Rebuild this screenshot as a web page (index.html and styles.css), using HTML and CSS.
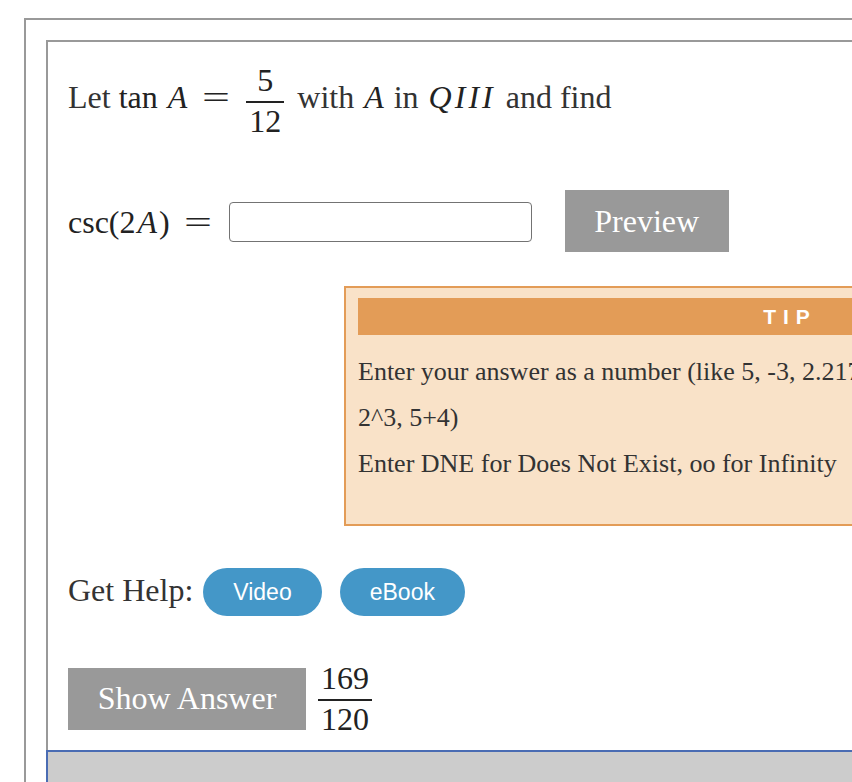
FILE: index.html
```html
<!DOCTYPE html>
<html lang="en">
<head>
<meta charset="utf-8">
<title>Question</title>
<link rel="stylesheet" href="styles.css">
</head>
<body>
<div class="outer">
  <div class="inner">
    <p class="question">Let <span class="m">tan&nbsp;<i class="var">A</i><span class="eq">=</span><span class="frac"><span class="num">5</span><span class="den">12</span></span></span> with <i class="m var">A</i> in <i class="m var wide">QIII</i> and find</p>

    <div class="answer-row">
      <span class="m lhs">csc(2<i class="var">A</i>)<span class="eq">=</span></span>
      <input class="ans" type="text" aria-label="answer">
      <button class="gray-btn preview">Preview</button>
    </div>

    <div class="tip">
      <div class="tip-head">TIP</div>
      <p class="tip-line">Enter your answer as a number (like 5, -3, 2.2172) or as a calculation (like 5/3, 2^3, 5+4)</p>
      <p class="tip-line">Enter DNE for Does Not Exist, oo for Infinity</p>
    </div>

    <div class="help-row">
      <span class="help-label">Get Help:</span>
      <button class="pill">Video</button>
      <button class="pill">eBook</button>
    </div>

    <div class="show-row">
      <button class="gray-btn show">Show Answer</button>
      <span class="m frac big"><span class="num">169</span><span class="den">120</span></span>
    </div>
  </div>
  <div class="footer"></div>
</div>
</body>
</html>
```

FILE: styles.css
```css
html, body {
  margin: 0;
  padding: 0;
  overflow: hidden;
  background: #fff;
}

body {
  font-family: "Liberation Serif", "Times New Roman", serif;
  font-size: 32px;
  color: #333;
}

.outer {
  width: 1400px;
  margin: 18px 0 0 24px;
  padding: 20px 0 0 20px;
  border: 2px solid #999;
  border-right: none;
  border-bottom: none;
}

.inner {
  border: 2px solid #999;
  border-bottom: none;
  padding: 22px 20px 15px 20px;
}

.m {
  color: #222;
}

.var {
  padding: 0 2px;
}

.var.wide {
  letter-spacing: 3px;
}

.question {
  margin: 0;
  line-height: 48px;
}

.eq {
  display: inline-block;
  width: 26px;
  text-align: center;
  margin: 0 15px 0 14px;
  transform: scaleX(1.55);
}

.frac {
  display: inline-flex;
  flex-direction: column;
  align-items: center;
  vertical-align: middle;
  line-height: 32px;
  margin: 0 5px 0 2px;
}

.frac .num {
  padding: 0 3px 5px;
}

.frac .den {
  padding: 2px 3px 0;
  border-top: 2px solid #222;
  align-self: stretch;
  text-align: center;
}

.answer-row {
  display: flex;
  align-items: center;
  margin-top: 53px;
  height: 62px;
}

.lhs {
  line-height: 36px;
  margin-top: 2px;
}

.lhs .eq {
  width: 24px;
  margin: 0 19px 0 16px;
}

.ans {
  width: 303px;
  height: 40px;
  box-sizing: border-box;
  border: 1px solid #737373;
  border-radius: 4px;
  margin: 2px 33px 0 0;
  padding: 0 8px;
  font: inherit;
  background: #fff;
}

.gray-btn {
  background: #999;
  color: #fff;
  border: none;
  font-family: "Liberation Serif", "Times New Roman", serif;
  font-size: 32px;
  height: 62px;
  padding: 0 30px;
  margin: 0;
}

.preview {
  width: 164px;
  padding: 0;
}

.tip {
  margin: 34px 0 0 276px;
  border: 2px solid #e39c57;
  background: #f9e2c8;
  padding: 10px 12px 37px;
  width: 864px;
}

.tip-head {
  background: #e39c57;
  color: #fff;
  font-family: "Liberation Sans", Arial, sans-serif;
  font-weight: bold;
  font-size: 21px;
  letter-spacing: 7px;
  height: 37px;
  line-height: 37px;
  text-align: center;
  margin-bottom: 14px;
}

.tip-line {
  margin: 0;
  font-size: 26px;
  line-height: 46px;
}

.help-row {
  display: flex;
  align-items: center;
  margin-top: 42px;
}

.help-label {
  margin-right: 10px;
  line-height: 36px;
  margin-top: -4px;
}

.pill {
  background: #4497c8;
  color: #fff;
  border: none;
  border-radius: 24px;
  height: 48px;
  padding: 0 30px;
  margin: 0 18px 0 0;
  font-family: "Liberation Sans", Arial, sans-serif;
  font-size: 23px;
}

.show-row {
  display: flex;
  align-items: center;
  margin-top: 46px;
}

.show {
  width: 238px;
  padding: 0;
}

.frac.big {
  margin-left: 12px;
}

.footer {
  height: 40px;
  background: #ccc;
  border-top: 2px solid #4a6cb3;
  border-left: 2px solid #4a6cb3;
}
```
